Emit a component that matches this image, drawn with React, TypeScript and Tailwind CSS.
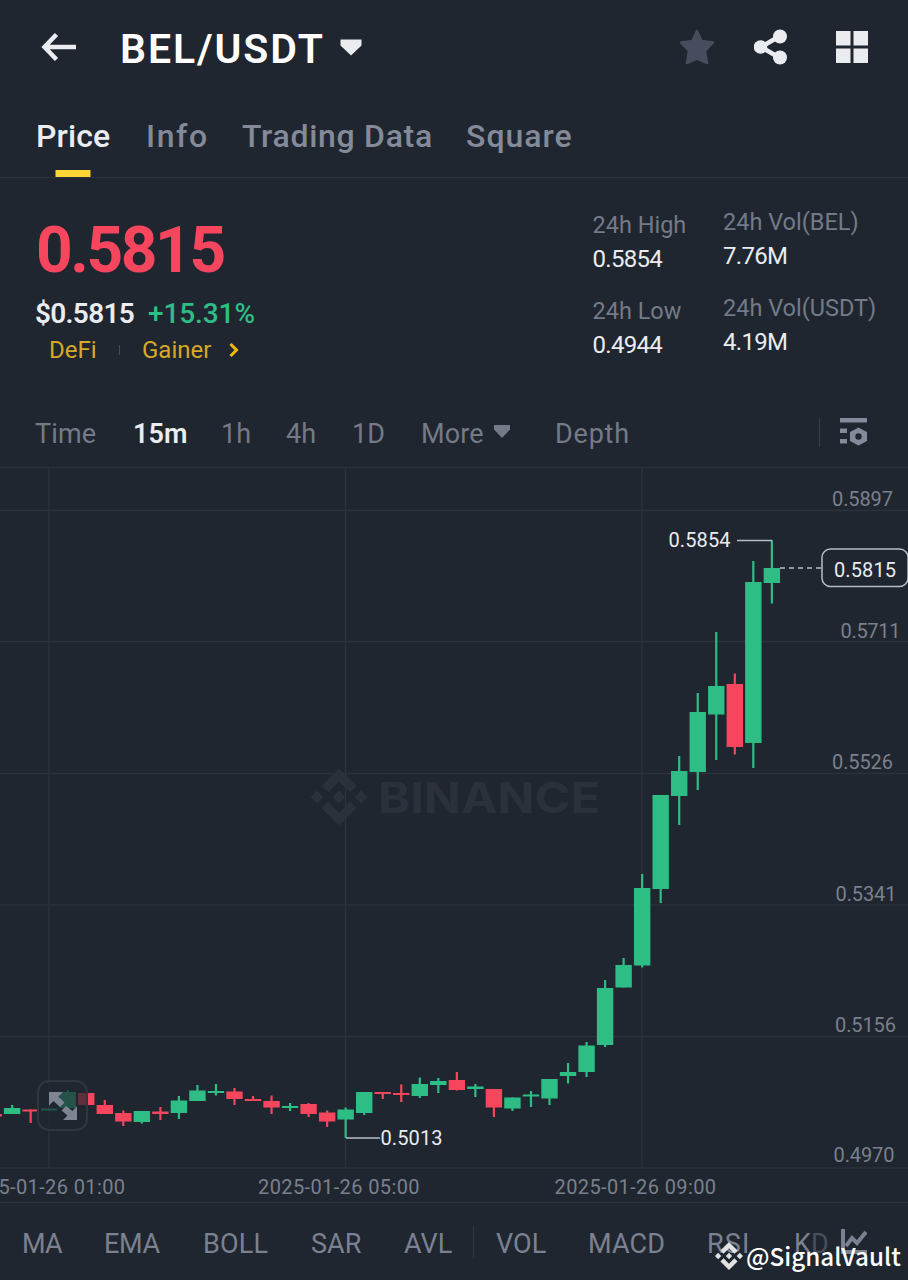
import { useState } from 'react';
import clsx from 'clsx';

interface Candle {
  open: number;
  close: number;
  high: number;
  low: number;
  up: boolean;
}

// [body top, body bottom, wick top, wick bottom, up] in chart pixels
const rows: [number, number, number, number, boolean][] = [
  [1114, 1116.5, 1114, 1116.5, false],
  [1108, 1114, 1105, 1114, true],
  [1109.5, 1111.5, 1109.5, 1123, false],
  [1108.5, 1110.5, 1108.5, 1110.5, true],
  [1092, 1108, 1090, 1108, true],
  [1093, 1105, 1093, 1105, false],
  [1105, 1114, 1100, 1114, false],
  [1113, 1121.5, 1110.5, 1126, false],
  [1111, 1122, 1111, 1123.5, true],
  [1111.5, 1114, 1107, 1120, false],
  [1100.5, 1113, 1096, 1119, true],
  [1090.5, 1101, 1085, 1101, true],
  [1091, 1093, 1084, 1095.5, true],
  [1091.5, 1099, 1088, 1105, false],
  [1099, 1101, 1096, 1101, false],
  [1101, 1107.5, 1095.5, 1114, false],
  [1106, 1108, 1103, 1111, true],
  [1104, 1114, 1103, 1117, false],
  [1112.5, 1121.5, 1110.5, 1127, false],
  [1109.5, 1119.5, 1107.5, 1138, true],
  [1092, 1113, 1092, 1115, true],
  [1092, 1094, 1092, 1099, false],
  [1093, 1095, 1084.5, 1102, false],
  [1084, 1096, 1077.5, 1098, true],
  [1081, 1085, 1078, 1093, true],
  [1080, 1090, 1072, 1090.5, false],
  [1086.5, 1089, 1084, 1097, true],
  [1089, 1107.5, 1089, 1117, false],
  [1097.5, 1108.5, 1097.5, 1111, true],
  [1094.5, 1096.5, 1091, 1107, true],
  [1079, 1098.5, 1079, 1105, true],
  [1072, 1076, 1063, 1083.5, true],
  [1045.5, 1072, 1042, 1077, true],
  [988, 1045, 980, 1047, true],
  [965, 987.5, 958, 987.5, true],
  [888, 965.5, 874, 967.5, true],
  [795, 889, 795, 903, true],
  [771, 796, 756, 825, true],
  [712, 772, 693, 790, true],
  [686, 714.5, 632, 760, true],
  [684, 747, 673.5, 754.5, false],
  [582, 743, 561, 768, true],
  [568, 583, 540, 603.5, true],
];

const candles: Candle[] = rows.map(([open, close, high, low, up]) => ({ open, close, high, low, up }));

const STEP = 18.53;
const FIRST_X = -6.4;

const priceLabels = [
  { text: '0.5897', x: 832, y: 506 },
  { text: '0.5711', x: 840.5, y: 637.5 },
  { text: '0.5526', x: 832, y: 769 },
  { text: '0.5341', x: 835.5, y: 900.5 },
  { text: '0.5156', x: 835, y: 1032 },
  { text: '0.4970', x: 833.5, y: 1162 },
];

const timeLabels = [
  { text: '2025-01-26 01:00', x: -36.5 },
  { text: '2025-01-26 05:00', x: 258 },
  { text: '2025-01-26 09:00', x: 554.5 },
];

const tabs = [
  { name: 'Price', width: 'w-[110px] tracking-[0.1px]' },
  { name: 'Info', width: 'w-[96px] tracking-[1.6px]' },
  { name: 'Trading Data', width: 'w-[224px] tracking-[0.7px]' },
  { name: 'Square', width: 'w-[120px] tracking-[1px]' },
];

const intervals = ['Time', '15m', '1h', '4h', '1D', 'More', 'Depth'];

const BINANCE_PATH =
  'M16.624 13.9202l2.7175 2.7154-7.353 7.353-7.353-7.352 2.7175-2.7164 4.6355 4.6595 4.6356-4.6595zm4.6366-4.6366L24 12l-2.7154 2.7164L18.5682 12l2.6924-2.7164zm-9.272.001l2.7163 2.6914-2.7164 2.7174v-.001L9.2721 12l2.7164-2.7154zm-9.2722-.001L5.4088 12l-2.6914 2.6924L0 12l2.7164-2.7164zM11.9885.0115l7.353 7.329-2.7174 2.7154-4.6356-4.6356-4.6355 4.6595-2.7174-2.7154 7.353-7.353z';

function Header() {
  return (
    <header className="flex h-[94px] items-center pl-[41px] pr-[40px]">
      <svg width="36" height="28" viewBox="0 0 36 28" fill="none" stroke="#eaecef" strokeWidth="4.500">
        <path d="M35 14H4M15.500 1.500L3.500 14l12 12.500" />
      </svg>
      <h1 className="ml-[43px] w-[220px] pt-[4px] text-[41px] leading-none font-semibold tracking-[1.9px] whitespace-nowrap text-white">BEL/USDT</h1>
      <svg width="22" height="17" viewBox="0 0 22 17" fill="#eaecef">
        <path d="M0.500 0.500h21v6L11 16.500L0.500 6.500z" />
      </svg>
      <div className="ml-auto flex items-center">
        <svg width="36" height="36" viewBox="0 0 36 36" fill="#474d5c" stroke="#474d5c" strokeWidth="2.500" strokeLinejoin="round">
          <path d="M18 2l4.500 10L34 13.500l-8 8.500L28 34l-10-4.500L8 34l2-12-8-8.500L13.500 12z" />
        </svg>
        <svg className="ml-[39px]" width="34" height="36" viewBox="0 0 34 36" fill="#eaecef">
          <path d="M26 7L7 18l19 11" fill="none" stroke="#eaecef" strokeWidth="4.500" />
          <circle cx="26" cy="7.500" r="7" />
          <circle cx="6.500" cy="18" r="6.800" />
          <circle cx="26" cy="28.500" r="7" />
        </svg>
        <svg className="ml-[48px]" width="32" height="32" viewBox="0 0 32 32" fill="#eaecef">
          <path d="M0 0h14.500v14.500H0zM17.500 0H32v14.500H17.500zM0 17.500h14.500V32H0zM17.500 17.500H32V32H17.500z" />
        </svg>
      </div>
    </header>
  );
}

function Stat({ label, value }: { label: string; value: string }) {
  return (
    <div className="h-[86px] whitespace-nowrap">
      <p className="text-[23.5px] leading-[24px] text-[#747a88]">{label}</p>
      <p className="mt-[10px] text-[24px] leading-[24px] tracking-[-0.7px] text-[#eaecef]">{value}</p>
    </div>
  );
}

function Summary() {
  return (
    <section className="flex h-[222px] pl-[36px]">
      <div className="w-[556.5px] pt-[41px]">
        <p className="text-[64px] leading-none font-bold tracking-[-2.4px] text-[#f6465d]">0.5815</p>
        <div className="mt-[17px] flex text-[28px] leading-none">
          <span className="-ml-px w-[113px] font-semibold tracking-[-0.7px] text-[#eaecef]">$0.5815</span>
          <span className="font-medium tracking-[-0.1px] text-[#2ebd85]">+15.31%</span>
        </div>
        <div className="mt-[10px] flex items-center pl-[13px] text-[24px] leading-none text-[#d8a829]">
          <span className="w-[70px]">DeFi</span>
          <span className="h-[10px] w-[1px] bg-[#474d57]" />
          <span className="ml-[22px] w-[87px]">Gainer</span>
          <svg width="10" height="14" viewBox="0 0 10 14" fill="none" stroke="#f0b90b" strokeWidth="3">
            <path d="M1.500 1l6 6-6 6" />
          </svg>
        </div>
      </div>
      <div className="w-[130.5px] pt-[35px]">
        <Stat label="24h High" value="0.5854" />
        <Stat label="24h Low" value="0.4944" />
      </div>
      <div className="pt-[32px]">
        <Stat label="24h Vol(BEL)" value="7.76M" />
        <Stat label="24h Vol(USDT)" value="4.19M" />
      </div>
    </section>
  );
}

function Chart() {
  return (
    <div className="relative h-[736px]">
      <svg className="block" width="908" height="736" viewBox="0 467 908 736">
        <g fill="#2b313b">
          <path transform="translate(310.500 768.500) scale(2.380)" d={BINANCE_PATH} />
          <text x="378" y="813" fontSize="43" fontWeight="700" textLength="222" lengthAdjust="spacingAndGlyphs" className="font-[Inter]">
            BINANCE
          </text>
        </g>

        <g stroke="#2c323c" strokeWidth="1.500">
          {[467.5, 510.5, 641.5, 773.5, 905, 1036.5, 1168, 1202.500].map((y) => (
            <line key={y} x1="0" x2="908" y1={y} y2={y} />
          ))}
          {[49, 345.5, 642].map((x) => (
            <line key={x} x1={x} x2={x} y1="467" y2="1168" />
          ))}
        </g>

        {candles.map((c, i) => {
          const x = FIRST_X + i * STEP;
          return (
            <g key={i} fill={c.up ? '#2ebd85' : '#f6465d'}>
              <rect x={x - 1.1} y={c.high} width="2.200" height={c.low - c.high} />
              <rect x={x - 8.2} y={c.open} width="16.400" height={c.close - c.open} />
            </g>
          );
        })}

        <g fill="none" stroke="#b7bdc6" strokeWidth="1.500">
          <path d="M737 540.500h35M346 1138h34" />
          <path d="M780 568h42" strokeDasharray="5 4" />
          <rect x="822" y="549" width="86" height="37.500" rx="8.500" fill="#1f262f" />
        </g>

        <g fontSize="20" fill="#eaecef">
          <text x="668.500" y="547" textLength="62">0.5854</text>
          <text x="380.500" y="1145" textLength="62">0.5013</text>
          <text x="834" y="577" textLength="62">0.5815</text>
        </g>
        <g fontSize="20" fill="#7b808d">
          {priceLabels.map((l) => (
            <text key={l.text} x={l.x} y={l.y} textLength={l.text === '0.5711' ? 60 : 61}>
              {l.text}
            </text>
          ))}
          {timeLabels.map((l) => (
            <text key={l.text} x={l.x} y="1193.500" textLength="161.500">
              {l.text}
            </text>
          ))}
        </g>
      </svg>

      <button className="absolute top-[613px] left-[37px] flex h-[51px] w-[51px] items-center justify-center rounded-[12px] border-2 border-[#30363f] bg-[#1f262f]/70">
        <svg width="28" height="28" viewBox="0 0 28 28" fill="#7d8492">
          <path d="M0 0h14L9.500 4.500l6 6-4.500 4.500-6.500-6L0 13.500zM28 28H14l4.500-4.500-6-5 4.500-4.500 6.500 5L28 14z" />
        </svg>
      </button>
    </div>
  );
}

function Indicators() {
  return (
    <footer className="relative grid h-[77px] grid-cols-[82px_99px_108px_93px_69px_23px_92px_119px_87px_auto] overflow-hidden pt-[28px] pl-[22px] text-[27px] leading-none text-[#7b8190]">
      <span className="tracking-[-0.9px]">MA</span>
      <span className="tracking-[-0.3px]">EMA</span>
      <span className="tracking-[0.2px]">BOLL</span>
      <span>SAR</span>
      <span>AVL</span>
      <i className="-mt-[5px] h-[32px] w-[1px] bg-[#2f3540]" />
      <span className="tracking-[0.1px]">VOL</span>
      <span className="tracking-[0.1px]">MACD</span>
      <span className="tracking-[1.2px]">RSI</span>
      <span className="whitespace-nowrap">
        K<span className="opacity-45">D</span>
      </span>
      <svg className="absolute top-[26px] left-[841px]" width="26" height="26" viewBox="0 0 26 26" fill="none" stroke="#7b8190" strokeWidth="4">
        <path d="M2 0v23h24M5 17l6-8 5 5 9-11" />
      </svg>
      <div className="absolute top-[39px] left-[715px] flex items-center text-white">
        <svg width="28" height="28" viewBox="0 0 24 24" fill="#e2e2e2">
          <path d={BINANCE_PATH} />
        </svg>
        <span className="ml-[3px] font-['Noto_Sans_CJK_SC',sans-serif] text-[24.200px] leading-none font-medium">@SignalVault</span>
      </div>
    </footer>
  );
}

export default function App() {
  const [tab, setTab] = useState('Price');
  const [interval, setInterval] = useState('15m');

  return (
    <div className="h-[1280px] w-[908px] overflow-hidden bg-[#1f262f] font-[Roboto,sans-serif]">
      <Header />

      <nav className="flex h-[84px] border-b border-[#2b313b] pt-[26px] pl-[36px]">
        {tabs.map((t) => (
          <button
            key={t.name}
            onClick={() => setTab(t.name)}
            className={clsx('text-left text-[32px] leading-none font-medium whitespace-nowrap', t.width, tab === t.name ? 'text-[#eaecef]' : 'text-[#848a99]')}
          >
            <span className="relative inline-block h-[57px]">
              {t.name}
              {tab === t.name && <i className="absolute bottom-0 left-1/2 h-[7px] w-[35px] -translate-x-1/2 bg-[#fcd535]" />}
            </span>
          </button>
        ))}
      </nav>

      <Summary />

      <div className="grid h-[67px] grid-cols-[98px_88px_65px_66px_69px_134px_264px_auto] items-center pl-[35px] text-[27px] leading-none text-[#747a88]">
        {intervals.map((item) => (
          <button
            key={item}
            onClick={() => setInterval(item)}
            className={clsx(
              'flex items-center pt-[2px]',
              item === 'Depth' ? 'tracking-[0.8px]' : 'tracking-[0.1px]',
              interval === item && 'font-semibold text-[#eaecef]'
            )}
          >
            {item}
            {item === 'More' && (
              <svg className="-mt-[6px] ml-[10px]" width="16" height="13" viewBox="0 0 16 13" fill="#747a88">
                <path d="M0 0h16v4.500L8 13 0 4.500z" />
              </svg>
            )}
          </button>
        ))}
        <div className="-mt-[3px] flex items-center">
          <i className="h-[29px] w-[1px] bg-[#3a404b]" />
          <svg className="ml-[20px]" width="28" height="28" viewBox="0 0 28 28" fill="#848a99">
            <path d="M0 0h27v4.500H0zM0 10.500h7V15H0zM0 21h7v4.500H0z" />
            <path fillRule="evenodd" d="M18.500 9.500l8.500 4.500v9l-8.500 4.500-8.500-4.500v-9zM18.500 15.300a3.200 3.200 0 1 0 0 6.400 3.200 3.200 0 0 0 0-6.400z" />
          </svg>
        </div>
      </div>

      <Chart />
      <Indicators />
    </div>
  );
}
